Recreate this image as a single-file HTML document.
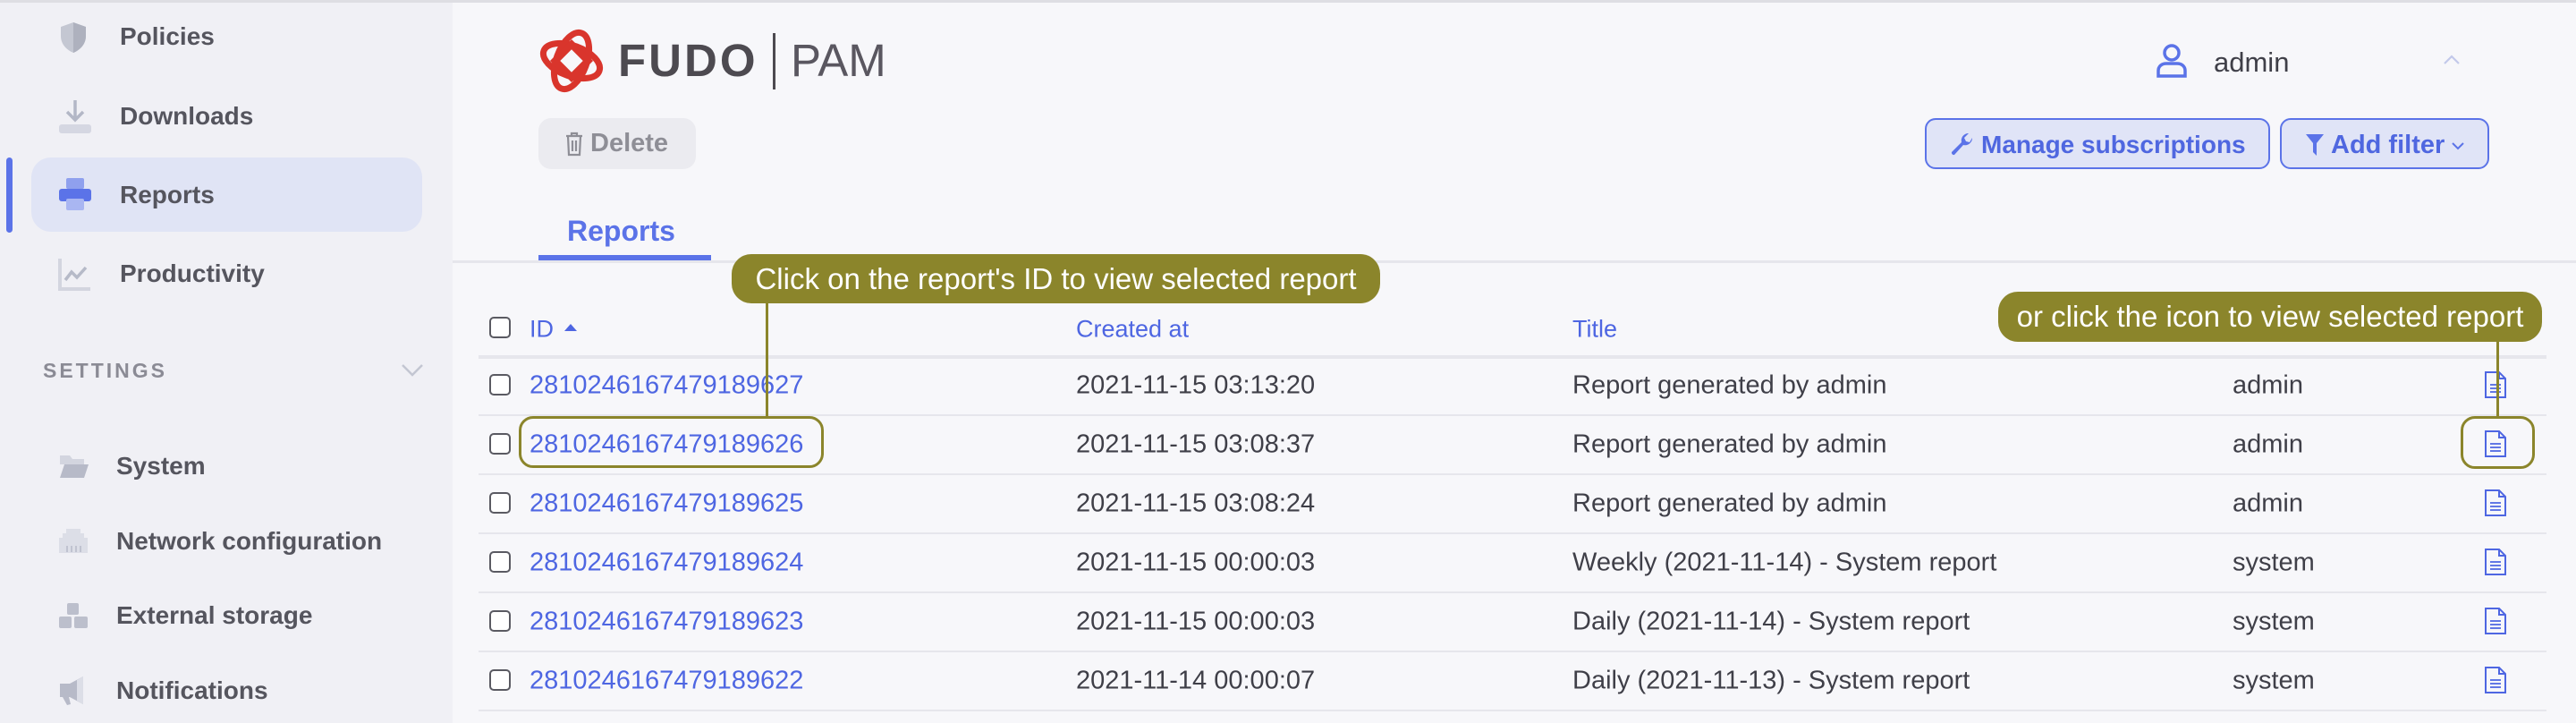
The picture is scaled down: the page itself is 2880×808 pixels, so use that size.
<!DOCTYPE html>
<html><head><meta charset="utf-8"><style>
*{margin:0;padding:0;box-sizing:border-box}
body{width:2880px;height:808px;overflow:hidden;background:#f7f7fa;font-family:"Liberation Sans",sans-serif;position:relative}
.a{position:absolute}
#side{left:0;top:0;width:506px;height:808px;background:#f0f0f5}
.si{position:absolute;font-weight:bold;font-size:28px;color:#55555e;line-height:1;transform:translateY(-50%)}
.cb{position:absolute;width:24px;height:24px;border:2px solid #5a5a62;border-radius:5px;background:#fff;left:547px;transform:translateY(-50%)}
.id{position:absolute;left:592px;color:#4e66e2;font-size:29px;transform:translateY(-50%);line-height:1}
.tx{position:absolute;color:#3f3f48;font-size:29px;transform:translateY(-50%);line-height:1;white-space:nowrap}
.sep{position:absolute;left:535px;width:2312px;height:2px;background:#e6e6ec}
.doc{position:absolute;left:2777px;width:26px;height:30px;transform:translateY(-50%)}
.call{position:absolute;background:#8b852b;color:#fff;font-size:33px;border-radius:22px;display:flex;align-items:center;justify-content:center;white-space:nowrap}
</style></head><body>
<div class="a" style="left:0;top:0;width:2880px;height:3px;background:#dedee3;z-index:5"></div>
<div id="side" class="a"></div>
<svg class="a" style="left:66px;top:24px" width="32" height="36" viewBox="0 0 32 36"><path d="M16 1 L30 6 V16 C30 26 23 32 16 35 C9 32 2 26 2 16 V6 Z" fill="#c4c7d2"/><path d="M16 1 L30 6 V16 C30 26 23 32 16 35 Z" fill="#aeb1be"/></svg>
<div class="si" style="left:134px;top:41px">Policies</div>
<svg class="a" style="left:64px;top:110px" width="40" height="40" viewBox="0 0 40 40"><path d="M20 2 V24 M11 15 L20 24 L29 15" stroke="#b3b7c6" stroke-width="3.5" fill="none"/><rect x="2" y="29" width="36" height="10" rx="3" fill="#d5d7e2"/></svg>
<div class="si" style="left:134px;top:130px">Downloads</div>
<div class="a" style="left:7px;top:176px;width:7px;height:84px;background:#5b73e8;border-radius:4px"></div>
<div class="a" style="left:35px;top:176px;width:437px;height:83px;background:#e0e4f5;border-radius:22px"></div>
<svg class="a" style="left:65px;top:198px" width="38" height="38" viewBox="0 0 38 38"><rect x="9" y="1" width="20" height="12" rx="2" fill="#8fa0ee"/><rect x="1" y="13" width="36" height="14" rx="3" fill="#5b73e8"/><rect x="9" y="24" width="20" height="13" rx="2" fill="#a9b6f2"/></svg>
<div class="si" style="left:134px;top:218px">Reports</div>
<svg class="a" style="left:65px;top:287px" width="38" height="38" viewBox="0 0 38 38"><path d="M2 2 V36 H36" stroke="#d3d5df" stroke-width="4" fill="none"/><path d="M8 26 L15 17 L21 23 L31 12" stroke="#b6bac8" stroke-width="3.5" fill="none"/></svg>
<div class="si" style="left:134px;top:306px">Productivity</div>
<div class="a" style="left:48px;top:401px;font-size:23px;letter-spacing:3px;color:#8b8b95;font-weight:bold">SETTINGS</div>
<svg class="a" style="left:448px;top:406px" width="26" height="16" viewBox="0 0 26 16"><path d="M2 2 L13 13 L24 2" stroke="#c3c6d2" stroke-width="2.5" fill="none"/></svg>
<svg class="a" style="left:66px;top:507px" width="34" height="28" viewBox="0 0 34 28"><path d="M1 2 H12 L15 6 H28 V12 H1Z" fill="#d3d5df"/><path d="M6 12 H33 L28 27 H1Z" fill="#b7bac8"/></svg>
<div class="si" style="left:130px;top:521px">System</div>
<svg class="a" style="left:66px;top:590px" width="32" height="28" viewBox="0 0 32 28"><path d="M8 1 H24 V6 H28 V11 H32 V28 H0 V11 H4 V6 H8Z" fill="#dcdee7"/><path d="M9 20 V27 M14 20 V27 M19 20 V27 M24 20 V27" stroke="#b7bac8" stroke-width="1.5"/></svg>
<div class="si" style="left:130px;top:605px">Network configuration</div>
<svg class="a" style="left:66px;top:673px" width="32" height="30" viewBox="0 0 32 30"><rect x="9" y="1" width="13" height="13" rx="2" fill="#bcbfcc"/><rect x="0" y="16" width="14" height="13" rx="2" fill="#bcbfcc"/><rect x="17" y="16" width="15" height="13" rx="2" fill="#bcbfcc"/></svg>
<div class="si" style="left:130px;top:688px">External storage</div>
<svg class="a" style="left:66px;top:755px" width="32" height="34" viewBox="0 0 32 34"><path d="M1 9 H12 L27 1 V32 L12 24 H1Z" fill="#b7bac8"/><path d="M4 24 L9 33 L13 32 L11 24Z" fill="#b7bac8"/><path d="M20 5 L27 1 V32 L20 28Z" fill="#dcdee7"/></svg>
<div class="si" style="left:130px;top:772px">Notifications</div>

<svg class="a" style="left:601px;top:31px" width="76" height="74" viewBox="-38 -37 76 74">
<g fill="none" stroke="#d9352c" stroke-width="7">
<ellipse rx="33" ry="17" transform="rotate(20)"/>
<ellipse rx="33" ry="17" transform="rotate(110)"/>
<rect x="-13" y="-13" width="26" height="26" transform="rotate(45)" stroke-width="8"/>
</g></svg>
<div class="a" style="left:691px;top:42px;font-size:51px;font-weight:bold;color:#4d4a50;line-height:1;letter-spacing:3px">FUDO</div>
<div class="a" style="left:864px;top:37px;width:3px;height:63px;background:#4d4a50"></div>
<div class="a" style="left:884px;top:42px;font-size:51px;color:#5a5760;line-height:1">PAM</div>

<div class="a" style="left:602px;top:132px;width:176px;height:57px;background:#ebebf0;border-radius:14px"></div>
<svg class="a" style="left:632px;top:147px" width="20" height="28" viewBox="0 0 20 28"><path d="M1 5 H19 M7 5 V2 H13 V5 M3 5 L4 26 H16 L17 5 M8 10 V22 M12 10 V22" stroke="#8e8e96" stroke-width="2.2" fill="none"/></svg>
<div class="a" style="left:660px;top:146px;font-size:29px;font-weight:bold;color:#8e8e96;line-height:1">Delete</div>

<div class="a" style="left:634px;top:242px;font-size:32px;font-weight:bold;color:#5b73e8;line-height:1">Reports</div>
<div class="a" style="left:506px;top:291px;width:2374px;height:3px;background:#e6e6ec"></div>
<div class="a" style="left:602px;top:285px;width:193px;height:6px;background:#5b73e8"></div>

<svg class="a" style="left:2410px;top:49px" width="36" height="38" viewBox="0 0 36 38"><circle cx="18" cy="10" r="8" stroke="#5b73e8" stroke-width="3.5" fill="none"/><path d="M3 36 V30 C3 25 7 22 12 22 H24 C29 22 33 25 33 30 V36 Z" stroke="#5b73e8" stroke-width="3.5" fill="none"/></svg>
<div class="a" style="left:2475px;top:54px;font-size:31px;color:#3f3f48;line-height:1">admin</div>
<svg class="a" style="left:2731px;top:61px" width="20" height="12" viewBox="0 0 20 12"><path d="M2 10 L10 2 L18 10" stroke="#c3c9ea" stroke-width="2.2" fill="none"/></svg>

<div class="a" style="left:2152px;top:132px;width:386px;height:57px;background:#e0e4f7;border:2.5px solid #5b73e8;border-radius:12px"></div>
<svg class="a" style="left:2181px;top:148px" width="26" height="28" viewBox="0 0 26 28"><path d="M24 6 A8 8 0 0 1 14 14 L4 25 A2.5 2.5 0 0 1 1 22 L12 11 A8 8 0 0 1 20 1 L15 6 L17 10 L21 11 Z" fill="#5b73e8"/></svg>
<div class="a" style="left:2215px;top:148px;font-size:28px;font-weight:bold;color:#4f67e0;line-height:1">Manage subscriptions</div>
<div class="a" style="left:2549px;top:132px;width:234px;height:57px;background:#e0e4f7;border:2.5px solid #5b73e8;border-radius:12px"></div>
<svg class="a" style="left:2577px;top:149px" width="22" height="26" viewBox="0 0 22 26"><path d="M1 1 H21 L13 11 V25 L9 21 V11 Z" fill="#5b73e8"/></svg>
<div class="a" style="left:2606px;top:148px;font-size:29px;font-weight:bold;color:#4f67e0;line-height:1">Add filter</div>
<svg class="a" style="left:2741px;top:159px" width="14" height="9" viewBox="0 0 14 9"><path d="M1 1 L7 7 L13 1" stroke="#5b73e8" stroke-width="2" fill="none"/></svg>

<div class="cb" style="top:366px"></div>
<div class="tx" style="left:592px;top:368px;color:#4e66e2;font-size:27px">ID</div>
<svg class="a" style="left:630px;top:361px" width="16" height="10" viewBox="0 0 16 10"><path d="M8 1 L15 9 H1Z" fill="#4e66e2"/></svg>
<div class="tx" style="left:1203px;top:368px;color:#4e66e2;font-size:27px">Created at</div>
<div class="tx" style="left:1758px;top:368px;color:#4e66e2;font-size:27px">Title</div>
<div class="a" style="left:535px;top:397px;width:2312px;height:4px;background:#e6e6ec"></div>

<div class="cb" style="top:430px"></div><div class="id" style="top:431px">2810246167479189627</div>
<div class="tx" style="left:1203px;top:431px">2021-11-15 03:13:20</div><div class="tx" style="left:1758px;top:431px">Report generated by admin</div><div class="tx" style="left:2496px;top:431px">admin</div>
<div class="sep" style="top:463px"></div>
<div class="cb" style="top:496px"></div><div class="id" style="top:497px">2810246167479189626</div>
<div class="tx" style="left:1203px;top:497px">2021-11-15 03:08:37</div><div class="tx" style="left:1758px;top:497px">Report generated by admin</div><div class="tx" style="left:2496px;top:497px">admin</div>
<div class="sep" style="top:529px"></div>
<div class="cb" style="top:562px"></div><div class="id" style="top:563px">2810246167479189625</div>
<div class="tx" style="left:1203px;top:563px">2021-11-15 03:08:24</div><div class="tx" style="left:1758px;top:563px">Report generated by admin</div><div class="tx" style="left:2496px;top:563px">admin</div>
<div class="sep" style="top:595px"></div>
<div class="cb" style="top:628px"></div><div class="id" style="top:629px">2810246167479189624</div>
<div class="tx" style="left:1203px;top:629px">2021-11-15 00:00:03</div><div class="tx" style="left:1758px;top:629px">Weekly (2021-11-14) - System report</div><div class="tx" style="left:2496px;top:629px">system</div>
<div class="sep" style="top:661px"></div>
<div class="cb" style="top:694px"></div><div class="id" style="top:695px">2810246167479189623</div>
<div class="tx" style="left:1203px;top:695px">2021-11-15 00:00:03</div><div class="tx" style="left:1758px;top:695px">Daily (2021-11-14) - System report</div><div class="tx" style="left:2496px;top:695px">system</div>
<div class="sep" style="top:727px"></div>
<div class="cb" style="top:760px"></div><div class="id" style="top:761px">2810246167479189622</div>
<div class="tx" style="left:1203px;top:761px">2021-11-14 00:00:07</div><div class="tx" style="left:1758px;top:761px">Daily (2021-11-13) - System report</div><div class="tx" style="left:2496px;top:761px">system</div>
<div class="sep" style="top:793px"></div>

<svg width="0" height="0" style="position:absolute"><defs><g id="d"><path d="M2 1 H17 L24 8 V29 H2 Z M17 1 V8 H24" stroke="#4e66e2" stroke-width="2" fill="none"/><path d="M7 15 H19 M7 19 H19 M7 23 H19" stroke="#4e66e2" stroke-width="1.8"/></g></defs></svg>
<svg class="doc" style="top:430px" viewBox="0 0 26 30"><use href="#d"/></svg>
<svg class="doc" style="top:496px" viewBox="0 0 26 30"><use href="#d"/></svg>
<svg class="doc" style="top:562px" viewBox="0 0 26 30"><use href="#d"/></svg>
<svg class="doc" style="top:628px" viewBox="0 0 26 30"><use href="#d"/></svg>
<svg class="doc" style="top:694px" viewBox="0 0 26 30"><use href="#d"/></svg>
<svg class="doc" style="top:760px" viewBox="0 0 26 30"><use href="#d"/></svg>

<div class="call" style="left:818px;top:284px;width:725px;height:55px">Click on the report's ID to view selected report</div>
<div class="a" style="left:856px;top:338px;width:3px;height:128px;background:#8b852b"></div>
<div class="a" style="left:580px;top:465px;width:341px;height:58px;border:3.5px solid #8b852b;border-radius:16px"></div>
<div class="call" style="left:2234px;top:326px;width:608px;height:56px">or click the icon to view selected report</div>
<div class="a" style="left:2791px;top:381px;width:3px;height:85px;background:#8b852b"></div>
<div class="a" style="left:2751px;top:465px;width:83px;height:59px;border:3.5px solid #8b852b;border-radius:16px"></div>
</body></html>
